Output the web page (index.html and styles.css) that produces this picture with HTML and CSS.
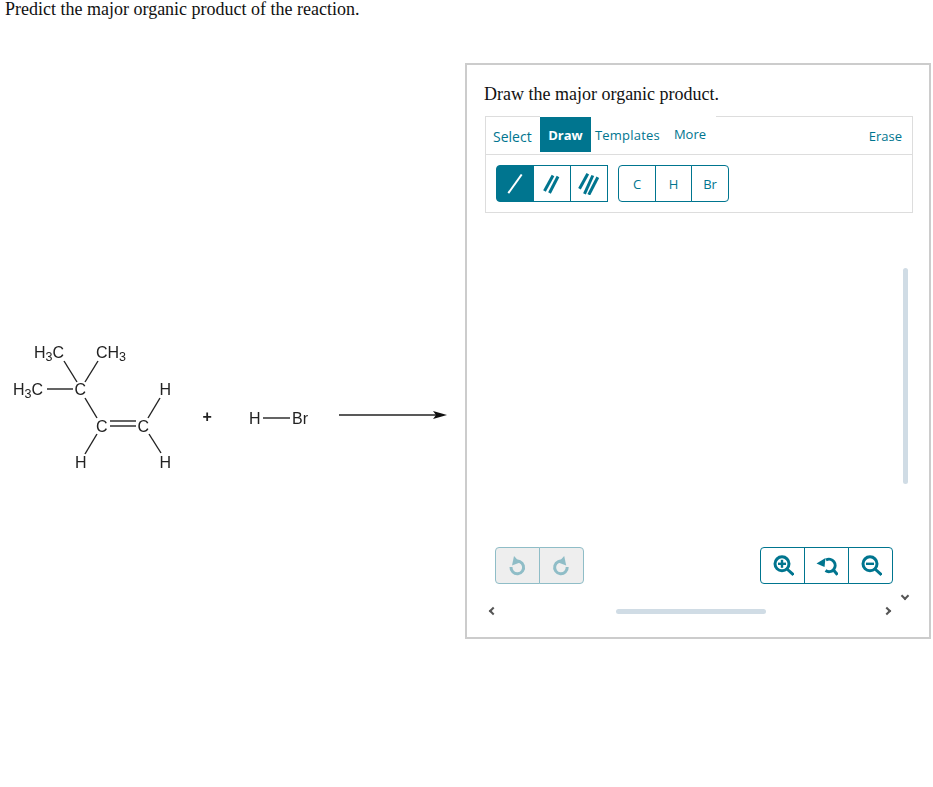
FILE: index.html
```html
<!DOCTYPE html>
<html lang="en">
<head>
  <meta charset="UTF-8">
  <title>Predict the major organic product</title>
  <link rel="stylesheet" href="styles.css">
</head>
<body>

  <p class="prompt">Predict the major organic product of the reaction.</p>

  <div class="question">
    <!-- reaction scheme, viewBox uses page coordinates -->
    <svg class="reaction" width="465" height="576" viewBox="0 63 465 576">
      <g class="bonds">
        <line x1="64" y1="361" x2="77" y2="382"/>
        <line x1="98" y1="361" x2="85" y2="382"/>
        <line x1="47" y1="389" x2="73" y2="389"/>
        <line x1="85" y1="398" x2="97" y2="418"/>
        <line x1="110" y1="421" x2="136" y2="421"/>
        <line x1="110" y1="426" x2="136" y2="426"/>
        <line x1="148" y1="418" x2="160" y2="398"/>
        <line x1="149" y1="434" x2="161" y2="453"/>
        <line x1="97" y1="434" x2="85" y2="454"/>
        <line x1="263" y1="418" x2="290" y2="418"/>
        <line class="arrow-line" x1="339" y1="415" x2="436" y2="415"/>
      </g>
      <polygon class="arrow-head" points="447,415 433,411 436,415 433,419"/>
      <g class="atoms">
        <text x="34" y="358">H<tspan class="sub" dy="3">3</tspan><tspan dy="-3">C</tspan></text>
        <text x="96" y="358">CH<tspan class="sub" dy="3">3</tspan></text>
        <text x="13" y="395">H<tspan class="sub" dy="3">3</tspan><tspan dy="-3">C</tspan></text>
        <text x="74.500" y="395">C</text>
        <text x="159.500" y="395">H</text>
        <text x="96" y="432">C</text>
        <text x="137.500" y="432">C</text>
        <text x="75" y="468">H</text>
        <text x="159.500" y="468">H</text>
        <text class="plus" x="202.500" y="422">+</text>
        <text x="249" y="424">H</text>
        <text x="292" y="424">Br</text>
      </g>
    </svg>

    <div class="panel">
      <p class="panel-title">Draw the major organic product.</p>

      <div class="editor">
        <div class="tabs">
          <span class="tab tab-select">Select</span>
          <div class="tab-group">
            <span class="tab tab-active">Draw</span>
            <span class="tab tab-templates">Templates</span>
            <span class="tab tab-more">More</span>
          </div>
          <span class="tab tab-erase">Erase</span>
        </div>

        <div class="tools">
          <div class="btn-group bonds-group">
            <button class="tool tool-on">
              <svg width="16" height="20" viewBox="0 0 16 20"><line x1="1.300" y1="19.200" x2="14.700" y2="0.500"/></svg>
            </button>
            <button class="tool">
              <svg width="18" height="20" viewBox="0 0 18 20"><line x1="1.500" y1="17" x2="10" y2="1.500"/><line x1="6.500" y1="19" x2="15" y2="2.500"/></svg>
            </button>
            <button class="tool">
              <svg width="22" height="22" viewBox="0 0 22 22"><line x1="1.500" y1="15.800" x2="9.800" y2="0.800"/><line x1="6.500" y1="20.800" x2="14.800" y2="2.500"/><line x1="10.800" y1="21.800" x2="19.800" y2="4.200"/></svg>
            </button>
          </div>
          <div class="btn-group atoms-group">
            <button class="tool atom">C</button>
            <button class="tool atom">H</button>
            <button class="tool atom">Br</button>
          </div>
        </div>
      </div>

      <div class="canvas">
        <div class="vbar"></div>
        <div class="bottom-tools">
          <div class="btn-group history">
            <button class="tool wide">
              <svg class="ico" width="20" height="20" viewBox="0 0 20 20"><path d="M6.500 5.800A6.300 6.300 0 1 1 3 11"/><polygon class="fill" points="6,0 4,9.500 12,6.500"/></svg>
            </button>
            <button class="tool wide">
              <svg class="ico" width="20" height="20" viewBox="0 0 20 20"><path d="M11.700 5.800A6.300 6.300 0 1 0 15.200 11"/><polygon class="fill" points="12.200,0 14.200,9.500 6.200,6.500"/></svg>
            </button>
          </div>
          <div class="btn-group zoom">
            <button class="tool wide">
              <svg class="ico" width="22" height="22" viewBox="0 0 22 22"><circle cx="10" cy="8.800" r="7"/><line x1="15" y1="14" x2="21.500" y2="19.800"/><line class="thin" x1="6" y1="8.800" x2="14" y2="8.800"/><line class="thin" x1="10" y1="4.800" x2="10" y2="12.800"/></svg>
            </button>
            <button class="tool wide">
              <svg class="ico" width="22" height="22" viewBox="0 0 22 22"><path d="M10 5A6.200 6.200 0 1 1 9.500 15.600"/><line x1="17.500" y1="15" x2="21.500" y2="19.800"/><polygon class="fill" points="0.500,8.500 9.500,3 8.500,12"/></svg>
            </button>
            <button class="tool wide">
              <svg class="ico" width="22" height="22" viewBox="0 0 22 22"><circle cx="10" cy="8.800" r="7"/><line x1="15" y1="14" x2="21.500" y2="19.800"/><line class="thin" x1="6" y1="8.800" x2="14" y2="8.800"/></svg>
            </button>
          </div>
        </div>
        <span class="chev chev-down"></span>
        <div class="hscroll">
          <span class="chev chev-left"></span>
          <div class="hbar"></div>
          <span class="chev chev-right"></span>
        </div>
      </div>
    </div>
  </div>

</body>
</html>
```

FILE: styles.css
```css
body {
  margin: 0;
  background: white;
  color: #111;
  font-family: 'Liberation Serif', serif;
}
.prompt {
  margin: 0;
  padding: 0 5px;
  height: 63px;
  font-size: 18px;
  line-height: 19px;
}
.question {
  display: flex;
  align-items: flex-start;
}
.reaction {
  display: block;
  flex: none;
  filter: blur(0.3px);
}
.bonds line {
  stroke: #222;
  stroke-width: 1.4;
}
.bonds .arrow-line {
  stroke-width: 1.6;
}
.arrow-head {
  fill: #111;
}
.atoms text {
  font-family: 'Liberation Sans', sans-serif;
  font-size: 16px;
  fill: #222;
}
.atoms .sub {
  font-size: 12.5px;
}
.atoms .plus {
  font-weight: bold;
}

.panel {
  box-sizing: border-box;
  width: 466px;
  height: 576px;
  border: 2px solid #ccc;
  padding: 19px 16px 0 18px;
  position: relative;
}
.panel-title {
  margin: 0 0 12px -1px;
  font-size: 18px;
  line-height: 20px;
}

.editor {
  font-family: 'Open Sans', sans-serif;
  color: #00758f;
}
.tabs {
  box-sizing: border-box;
  height: 39px;
  display: flex;
  align-items: stretch;
  border: 1px solid #ddd;
  font-size: 13px;
}
.tab {
  display: flex;
  align-items: center;
  padding: 2px 7px 0;
}
.tab-select {
  width: 47px;
  padding: 2px 0 0 7px;
  font-size: 14px;
}
.tab-group {
  display: flex;
  height: 36px;
  margin-top: -1px;
  background: white;
  width: 176px;
}
.tab-group .tab {
  padding: 0 4px;
}
.tab-active {
  box-sizing: border-box;
  background: #00758f;
  color: white;
  font-weight: bold;
  margin-top: 1px;
  height: 35px;
  width: 51px;
  justify-content: center;
}
.tab-group .tab-templates {
  letter-spacing: 0.2px;
  padding-top: 2px;
}
.tab-more {
  margin-left: 6px;
}
.tab-erase {
  margin-left: auto;
  padding: 0 10px 0 7px;
}

.tools {
  box-sizing: border-box;
  height: 58px;
  display: flex;
  gap: 10px;
  padding: 10px 10px 0;
  border: 1px solid #ddd;
  border-top: none;
}
.btn-group {
  display: flex;
  height: 37px;
}
.tool {
  box-sizing: border-box;
  width: 37px;
  height: 37px;
  padding: 0;
  display: flex;
  align-items: center;
  justify-content: center;
  background: white;
  border: 1px solid #00758f;
  margin-left: -1px;
  color: #00758f;
  font-family: 'Open Sans', sans-serif;
  font-size: 13px;
}
.tool:first-child {
  margin-left: 0;
  border-radius: 4px 0 0 4px;
}
.tool:last-child {
  border-radius: 0 4px 4px 0;
}
.bonds-group .tool:last-child {
  border-radius: 0;
}
.bonds-group .tool {
  width: 38px;
}
.atoms-group .tool:first-child {
  width: 38px;
}
.atoms-group .tool:last-child {
  width: 38px;
}
.tool svg line {
  stroke: #00758f;
  stroke-width: 3;
}
.tool-on {
  background: #00758f;
}
.tool-on svg line {
  stroke: white;
  stroke-width: 2;
}

.canvas {
  position: relative;
  height: 424px;
}
.vbar {
  position: absolute;
  left: 418px;
  top: 55px;
  width: 5px;
  height: 216px;
  border-radius: 3px;
  background: #d0dce5;
}
.bottom-tools {
  position: absolute;
  top: 334px;
  left: 10px;
  right: 20px;
  display: flex;
  justify-content: space-between;
}
.tool.wide {
  width: 45px;
}
.ico path,
.ico circle,
.ico line {
  fill: none;
  stroke: #00758f;
  stroke-width: 3;
}
.ico .thin {
  stroke-width: 2.4;
}
.ico .fill {
  fill: #00758f;
}
.history .tool {
  background: #eee;
  border-color: #8fbdc7;
}
.history .ico path {
  stroke: #8fbdc7;
}
.history .ico .fill {
  fill: #8fbdc7;
}

.hscroll {
  position: absolute;
  top: 395px;
  left: 5px;
  width: 400px;
  height: 6px;
  display: flex;
  align-items: center;
  justify-content: space-between;
}
.hbar {
  width: 150px;
  height: 5px;
  border-radius: 3px;
  background: #d0dce5;
  margin-left: 1px;
}
.chev {
  display: block;
  width: 4px;
  height: 4px;
  border-left: 2px solid #555;
  border-bottom: 2px solid #555;
}
.chev-left {
  transform: rotate(45deg);
}
.chev-right {
  transform: rotate(225deg);
}
.chev-down {
  position: absolute;
  top: 380px;
  left: 417px;
  transform: rotate(-45deg);
}
```
